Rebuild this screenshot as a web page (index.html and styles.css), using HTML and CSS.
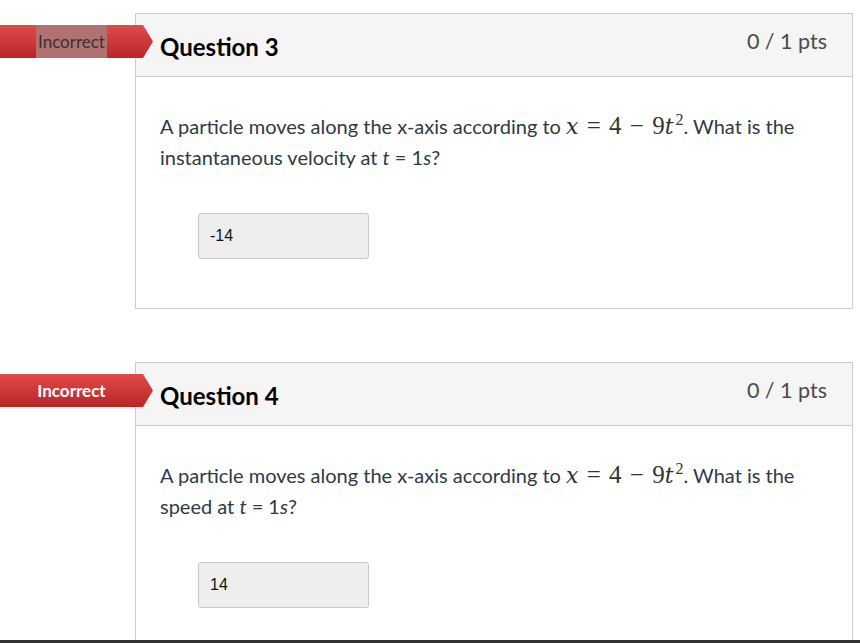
FILE: index.html
```html
<!DOCTYPE html>
<html lang="en">
<head>
<meta charset="utf-8">
<title>Quiz results</title>
<link rel="stylesheet" href="styles.css">
</head>
<body>
<main class="quiz">
  <section class="question">
    <div class="banner"><span class="banner-label hovered">Incorrect</span></div>
    <header class="q-header">
      <h2 class="q-name">Question 3</h2>
      <span class="q-points">0 / 1 pts</span>
    </header>
    <div class="q-body">
      <p class="q-text">A particle moves along the x-axis according to <span class="math"><i>x</i> <span class="op">=</span> 4 <span class="op">−</span> 9<i>t</i><sup>2</sup></span>. What is the instantaneous velocity at <i>t</i> = 1<i>s</i>?</p>
      <div class="answer">-14</div>
    </div>
  </section>

  <section class="question">
    <div class="banner"><span class="banner-label">Incorrect</span></div>
    <header class="q-header">
      <h2 class="q-name">Question 4</h2>
      <span class="q-points">0 / 1 pts</span>
    </header>
    <div class="q-body">
      <p class="q-text">A particle moves along the x-axis according to <span class="math"><i>x</i> <span class="op">=</span> 4 <span class="op">−</span> 9<i>t</i><sup>2</sup></span>. What is the speed at <i>t</i> = 1<i>s</i>?</p>
      <div class="answer">14</div>
    </div>
  </section>
</main>
<div class="bottom-bar"></div>
</body>
</html>
```
FILE: styles.css
```css
html, body {
  margin: 0;
  padding: 0;
  background: #ffffff;
}
body {
  font-family: Lato, "Liberation Sans", sans-serif;
  color: #2d3b45;
  overflow: hidden;
}
.quiz {
  display: flex;
  flex-direction: column;
  gap: 53px;
  padding: 13px 7px 0 135px;
}
.question {
  position: relative;
  border: 1px solid #c7cdd1;
  background: #fff;
}
.q-header {
  display: flex;
  align-items: center;
  justify-content: space-between;
  height: 62px;
  padding: 0 25px 0 24px;
  background: #f5f5f5;
  border-bottom: 1px solid #c7cdd1;
}
.q-name {
  margin: 0;
  font-size: 24px;
  font-weight: 700;
  color: #000;
  padding-top: 3px;
}
.q-points {
  font-size: 21.5px;
  color: #4b4b4b;
  align-self: flex-start;
  margin-top: 14px;
}
.q-body {
  padding: 33px 24px 49px 24px;
}
.q-text {
  margin: 0;
  font-size: 20px;
  line-height: 31px;
  color: #2d3b45;
}
.math {
  font-family: "Liberation Serif", "DejaVu Serif", serif;
  font-size: 25px;
  color: #333;
}
.math i {
  font-family: "DejaVu Serif", serif;
  font-size: 22px;
}
.math .op {
  padding: 0 2px;
}
.math sup {
  font-size: 16px;
  line-height: 0;
  margin-left: 2px;
}
.answer {
  margin: 40px 0 0 38px;
  width: 158px;
  height: 44px;
  padding: 0 0 0 11px;
  box-sizing: content-box;
  border: 1px solid #c8c8c8;
  border-radius: 3px;
  background: #eeeeee;
  display: flex;
  align-items: center;
  font-family: "Liberation Sans", Arial, sans-serif;
  font-size: 16px;
  color: #111;
}
.banner {
  position: absolute;
  left: -136px;
  top: 11px;
  width: 153px;
  height: 33px;
  background: linear-gradient(#e34a4a, #b82626);
  clip-path: polygon(0 0, 143px 0, 153px 50%, 143px 100%, 0 100%);
  display: flex;
  align-items: center;
  justify-content: center;
  padding-right: 10px;
  box-sizing: border-box;
}
.banner-label {
  font-size: 17px;
  font-weight: 700;
  color: #fff;
  line-height: 33px;
  padding: 0 2px;
}
.banner-label.hovered {
  font-weight: 400;
  color: #333;
  background: #b27171;
}
.bottom-bar {
  position: fixed;
  left: 0;
  right: 0;
  bottom: 0;
  height: 3px;
  background: #333;
}
```
